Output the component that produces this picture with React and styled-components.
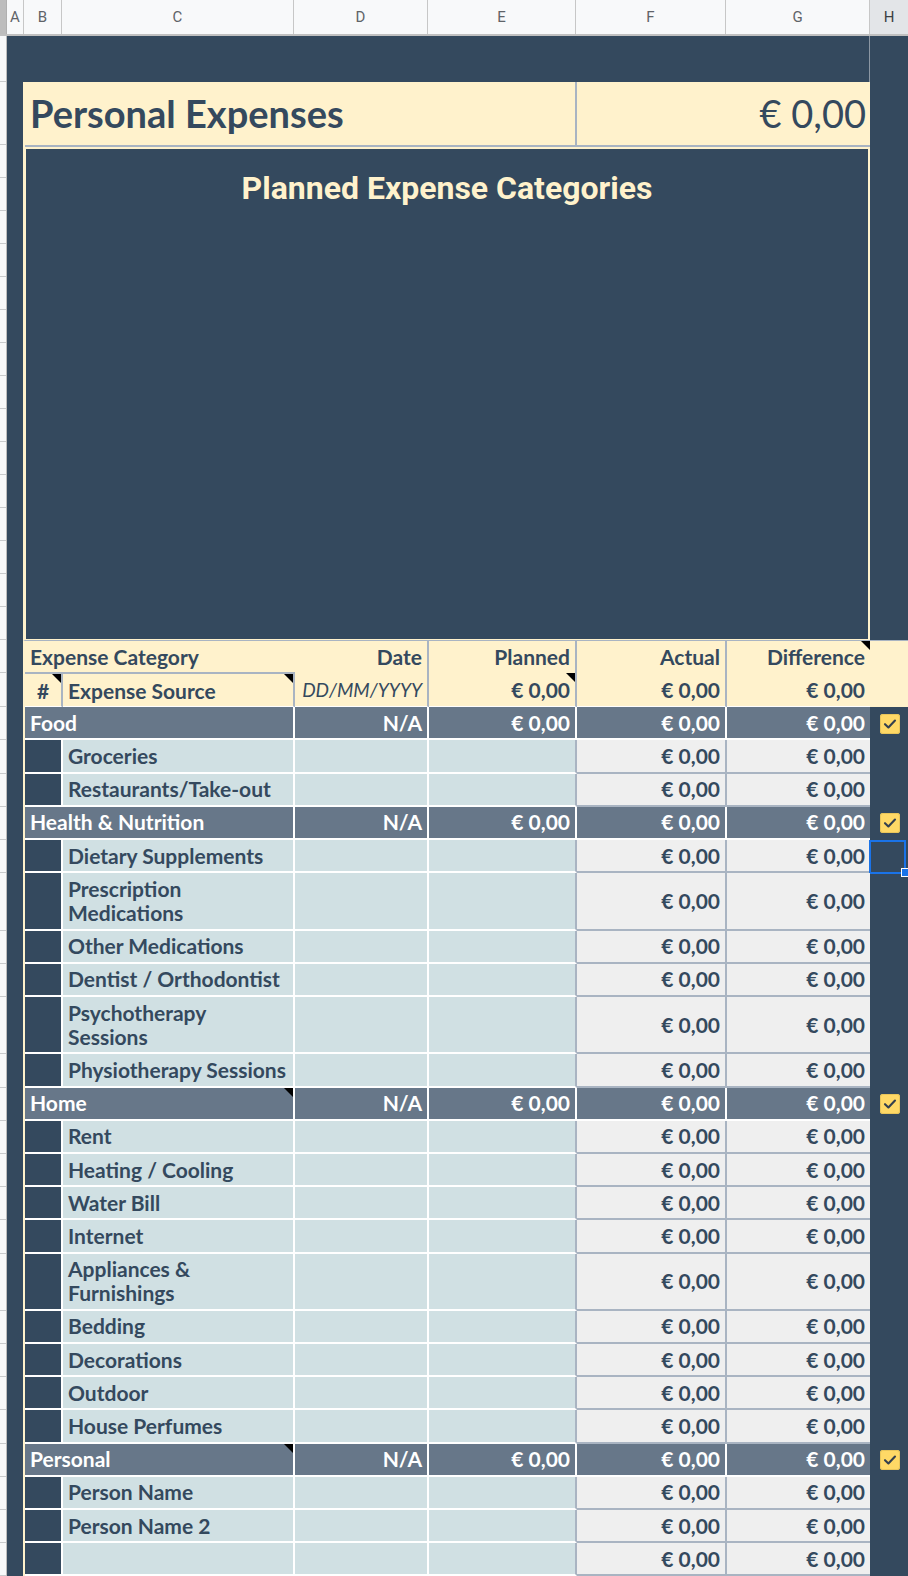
import React from 'react';
import styled, { createGlobalStyle } from 'styled-components';

const C = {
  navy: '#34495e',
  cream: '#fff2cc',
  slate: '#677789',
  cyan: '#d0e0e3',
  gray: '#efefef',
  rule: '#a9b4c2',
  white: '#ffffff',
};

const GlobalStyle = createGlobalStyle`
  html, body { margin: 0; padding: 0; background: #ffffff; }
  body { overflow: hidden; }
  *, *::before, *::after { box-sizing: border-box; }
`;

const Page = styled.div`
  width: 908px;
  height: 1576px;
  overflow: hidden;
  display: flex;
  flex-direction: column;
  font-family: Lato, "Open Sans", sans-serif;
`;

/* ---------- column letters ---------- */
const ColumnBar = styled.div`
  flex: none;
  display: grid;
  grid-template-columns: 7px 17px 38px 232px 134px 148px 150px 144px 38px;
  height: 36px;
  background: #f8f9fa;
  border-bottom: 2px solid #c0c0c0;
`;

const HeadCell = styled.div`
  display: flex;
  align-items: center;
  justify-content: center;
  border-right: 1px solid #c7c7c7;
  font-family: Roboto, "Liberation Sans", sans-serif;
  font-size: 15px;
  color: ${(p) => (p.$active ? '#3c4043' : '#5f6368')};
  background: ${(p) => (p.$active ? '#e3e5e8' : 'transparent')};
  &:last-child { border-right: none; }
`;

const Corner = styled.div`
  background: #bdbdbd;
  border-right: 1px solid #b0b0b0;
`;

/* ---------- body ---------- */
const Body = styled.div`
  flex: 1;
  min-height: 0;
  display: flex;
`;

const Gutter = styled.div`
  flex: none;
  width: 7px;
  background: #f8f9fa;
  border-right: 1px solid #bdbdbd;
  display: flex;
  flex-direction: column;
`;

const GutterCell = styled.div`
  flex: none;
  height: ${(p) => p.$h}px;
  border-bottom: 1px solid #c9cbcd;
`;

const Sheet = styled.div`
  flex: none;
  width: 901px;
  background: ${C.navy};
  display: flex;
  flex-direction: column;
  padding-left: 16px;
`;

const BannerRow = styled.div`
  flex: none;
  height: 45.7px;
  margin-right: 38px;
  border-right: 1px solid #8c97a3;
`;

const Row = styled.div`
  flex: none;
  position: relative;
  display: grid;
  grid-template-columns: 38px 232px 134px 148px 150px 143px 38px;
  height: ${(p) => p.$h}px;
  border-left: 2px solid ${C.cream};
`;

/* ---------- title row ---------- */
const TitleCell = styled.div`
  grid-column: ${(p) => p.$span};
  display: flex;
  align-items: center;
  justify-content: ${(p) => (p.$right ? 'flex-end' : 'flex-start')};
  padding: 0 ${(p) => (p.$right ? '4px' : '5px')};
  background: ${C.cream};
  color: ${C.navy};
  font-size: 38px;
  font-weight: ${(p) => (p.$right ? 400 : 700)};
  border-bottom: 2px solid ${C.rule};
  border-right: ${(p) => (p.$divider ? `2px solid ${C.rule}` : 'none')};
  white-space: nowrap;
`;

/* ---------- chart panel ---------- */
const Panel = styled.div`
  grid-column: 1 / 7;
  background: ${C.navy};
  border-style: solid;
  border-color: ${C.cream};
  border-width: 2.6px 2px 1.7px 1px;
  display: flex;
  justify-content: center;
  align-items: flex-start;
  padding-top: 23px;
`;

const PanelTitle = styled.h2`
  margin: 0;
  font-family: Roboto, "Open Sans", sans-serif;
  font-weight: 700;
  font-size: 32px;
  line-height: 1;
  color: ${C.cream};
`;

/* ---------- table header ---------- */
const HeaderGrid = styled(Row)`
  grid-template-rows: 33.3px 34px;
  background: ${C.cream};
  color: ${C.navy};
  font-weight: 700;
  font-size: 21px;
  border-top: 1.7px solid ${C.rule};
`;

const HeadLabel = styled.div`
  position: relative;
  grid-column: ${(p) => p.$col};
  grid-row: ${(p) => p.$row};
  display: flex;
  align-items: center;
  justify-content: ${(p) => (p.$center ? 'center' : 'flex-start')};
  padding: 0 5px;
  white-space: nowrap;
  border-right: ${(p) => (p.$vr ? `2px solid ${C.rule}` : 'none')};
  border-bottom: 2px solid ${(p) => p.$hr};
`;

const HeadColumn = styled.div`
  grid-column: ${(p) => p.$col};
  grid-row: 1 / 3;
  display: grid;
  grid-template-rows: 31.6px 1fr;
  border-right: ${(p) => (p.$last ? 'none' : `2px solid ${C.rule}`)};
  border-bottom: 2px solid ${C.white};
`;

const HeadLine = styled.div`
  position: relative;
  display: flex;
  align-items: center;
  justify-content: flex-end;
  padding: 0 5px;
  white-space: nowrap;
  font-style: ${(p) => (p.$italic ? 'italic' : 'normal')};
  font-weight: ${(p) => (p.$italic ? 400 : 700)};
  font-size: ${(p) => (p.$italic ? '19px' : '21px')};
`;

const Note = styled.span`
  position: absolute;
  top: 0;
  right: 0;
  width: 0;
  height: 0;
  border-top: 9px solid #000;
  border-left: 9px solid transparent;
`;

/* ---------- data cells ---------- */
const Cell = styled.div`
  position: relative;
  min-width: 0;
  display: flex;
  align-items: center;
  justify-content: ${(p) => (p.$right ? 'flex-end' : 'flex-start')};
  padding: 0 5px;
  font-size: 21px;
  font-weight: 700;
  line-height: 24px;
  white-space: nowrap;
  background: ${(p) => p.$bg};
  color: ${(p) => p.$fg || C.navy};
  border-right: ${(p) => (p.$vr ? `2px solid ${p.$vr}` : 'none')};
  border-bottom: 2px solid ${(p) => p.$hr || C.white};
`;

const CategoryName = styled(Cell)`
  grid-column: 1 / 3;
`;

const HCell = styled.div`
  position: relative;
  display: flex;
  align-items: center;
  justify-content: center;
`;

const Checkbox = styled.span`
  width: 20px;
  height: 20px;
  margin-left: 2px;
  border-radius: 3px;
  background: #ffd966;
  box-shadow: inset 0 0 0 1px #e9c55a;
  display: flex;
  align-items: center;
  justify-content: center;
`;

const Selection = styled.span`
  position: absolute;
  left: -1px;
  top: 0;
  width: 37px;
  bottom: -1px;
  border: 2px solid #1a73e8;
`;

const Handle = styled.span`
  position: absolute;
  right: -5px;
  bottom: -5px;
  width: 8px;
  height: 9px;
  background: #1a73e8;
  border: 1px solid #ffffff;
`;

const Money = ({ children = '€ 0,00' }) => <>{children}</>;

const sections = [
  { name: 'Food', items: ['Groceries', 'Restaurants/Take-out'] },
  {
    name: 'Health & Nutrition',
    items: [
      'Dietary Supplements',
      ['Prescription', 'Medications'],
      'Other Medications',
      'Dentist / Orthodontist',
      ['Psychotherapy', 'Sessions'],
      'Physiotherapy Sessions',
    ],
  },
  {
    name: 'Home',
    note: true,
    items: [
      'Rent',
      'Heating / Cooling',
      'Water Bill',
      'Internet',
      ['Appliances &', 'Furnishings'],
      'Bedding',
      'Decorations',
      'Outdoor',
      'House Perfumes',
    ],
  },
  { name: 'Personal', note: true, items: ['Person Name', 'Person Name 2', ''] },
];

const SINGLE = 33.2;
const DOUBLE = 57.4;

const rows = [];
sections.forEach((s) => {
  rows.push({ kind: 'cat', name: s.name, note: s.note, h: SINGLE });
  s.items.forEach((it) =>
    rows.push({
      kind: 'item',
      label: it,
      h: Array.isArray(it) ? DOUBLE : SINGLE,
      selected: it === 'Dietary Supplements',
    })
  );
});

const gutterHeights = [45.7, 63.3, ...Array(15).fill(33), 33.3, 34, ...rows.map((r) => r.h)];

function CheckMark() {
  return (
    <svg width="14" height="14" viewBox="0 0 14 14" fill="none">
      <path d="M2 7.2 L5.4 10.5 L12 3.6" stroke="#34404e" strokeWidth="2.1" strokeLinecap="round" strokeLinejoin="round" />
    </svg>
  );
}

function CategoryRow({ row }) {
  return (
    <Row $h={row.h}>
      <CategoryName $bg={C.slate} $fg={C.white} $vr={C.white}>
        {row.name}
        {row.note && <Note />}
      </CategoryName>
      <Cell $bg={C.slate} $fg={C.white} $vr={C.white} $right>N/A</Cell>
      <Cell $bg={C.slate} $fg={C.white} $vr={C.white} $right><Money /></Cell>
      <Cell $bg={C.slate} $fg={C.white} $vr={C.white} $right><Money /></Cell>
      <Cell $bg={C.slate} $fg={C.white} $right><Money /></Cell>
      <HCell>
        <Checkbox><CheckMark /></Checkbox>
      </HCell>
    </Row>
  );
}

function ItemRow({ row }) {
  const label = Array.isArray(row.label) ? (
    <span>
      {row.label[0]}
      <br />
      {row.label[1]}
    </span>
  ) : (
    row.label
  );
  return (
    <Row $h={row.h}>
      <Cell $bg={C.navy} $vr={C.white} />
      <Cell $bg={C.cyan} $vr={C.white}>{label}</Cell>
      <Cell $bg={C.cyan} $vr={C.white} />
      <Cell $bg={C.cyan} $vr={C.rule} />
      <Cell $bg={C.gray} $vr={C.rule} $hr={C.rule} $right><Money /></Cell>
      <Cell $bg={C.gray} $hr={C.rule} $right><Money /></Cell>
      <HCell>
        {row.selected && (
          <Selection>
            <Handle />
          </Selection>
        )}
      </HCell>
    </Row>
  );
}

export default function App() {
  return (
    <>
      <GlobalStyle />
      <Page>
        <ColumnBar>
          <Corner />
          {['A', 'B', 'C', 'D', 'E', 'F', 'G'].map((l) => (
            <HeadCell key={l}>{l}</HeadCell>
          ))}
          <HeadCell $active>H</HeadCell>
        </ColumnBar>
        <Body>
          <Gutter>
            {gutterHeights.map((h, i) => (
              <GutterCell key={i} $h={h} />
            ))}
          </Gutter>
          <Sheet>
            <BannerRow />
            <Row $h={65}>
              <TitleCell $span="1 / 5" $divider>Personal Expenses</TitleCell>
              <TitleCell $span="5 / 7" $right>€ 0,00</TitleCell>
            </Row>
            <Row $h={493.3}>
              <Panel>
                <PanelTitle>Planned Expense Categories</PanelTitle>
              </Panel>
            </Row>
            <HeaderGrid $h={67.3}>
              <HeadLabel $col="1 / 3" $row="1" $hr={C.rule}>Expense Category</HeadLabel>
              <HeadLabel $col="1" $row="2" $center $vr $hr={C.white}>
                #<Note />
              </HeadLabel>
              <HeadLabel $col="2" $row="2" $hr={C.white} $vr>
                Expense Source<Note />
              </HeadLabel>
              <HeadColumn $col="3">
                <HeadLine>Date</HeadLine>
                <HeadLine $italic>DD/MM/YYYY</HeadLine>
              </HeadColumn>
              <HeadColumn $col="4">
                <HeadLine>Planned</HeadLine>
                <HeadLine>
                  <Money />
                  <Note />
                </HeadLine>
              </HeadColumn>
              <HeadColumn $col="5">
                <HeadLine>Actual</HeadLine>
                <HeadLine><Money /></HeadLine>
              </HeadColumn>
              <HeadColumn $col="6" $last>
                <HeadLine>
                  Difference
                  <Note />
                </HeadLine>
                <HeadLine><Money /></HeadLine>
              </HeadColumn>
            </HeaderGrid>
            {rows.map((r, i) =>
              r.kind === 'cat' ? <CategoryRow key={i} row={r} /> : <ItemRow key={i} row={r} />
            )}
          </Sheet>
        </Body>
      </Page>
    </>
  );
}
